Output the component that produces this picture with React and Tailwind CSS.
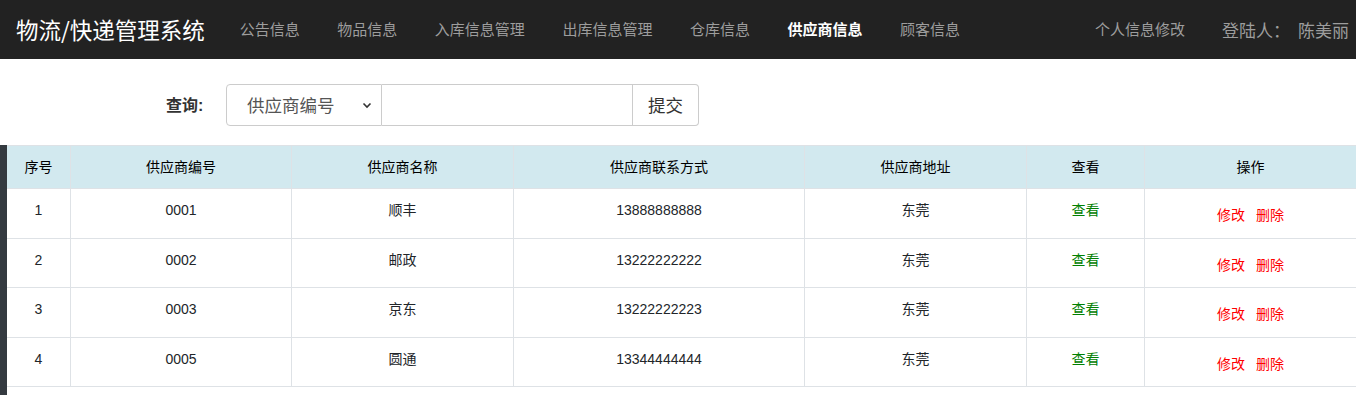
import React from "react";

const font = { fontFamily: '"Liberation Sans", "Noto Sans CJK SC", sans-serif' };

const navLinks = ["公告信息", "物品信息", "入库信息管理", "出库信息管理", "仓库信息", "供应商信息", "顾客信息"];

const rows = [
  ["1", "0001", "顺丰", "13888888888", "东莞"],
  ["2", "0002", "邮政", "13222222222", "东莞"],
  ["3", "0003", "京东", "13222222223", "东莞"],
  ["4", "0005", "圆通", "13344444444", "东莞"],
];

const headers = ["序号", "供应商编号", "供应商名称", "供应商联系方式", "供应商地址", "查看", "操作"];
const cols = "grid grid-cols-[64px_221px_222px_291px_222px_118px_1fr]";

export default function App() {
  return (
    <div className="w-[1356px] h-[395px] bg-white overflow-hidden" style={font}>
      <nav className="h-[59px] bg-[#222222] flex items-center pl-[16px] pr-[7px]">
        <div className="text-[22.5px] text-white leading-none" style={{ fontFamily: '"Noto Sans CJK SC", sans-serif' }}>
          物流/快递管理系统
        </div>
        <div className="flex gap-[37.5px] ml-[35px] text-[15px]" style={{ fontFamily: '"Noto Sans CJK SC", sans-serif' }}>
          {navLinks.map((l) => (
            <span key={l} className={l === "供应商信息" ? "text-white font-bold" : "text-[#9d9d9d]"}>
              {l}
            </span>
          ))}
        </div>
        <div className="ml-auto flex items-center text-[#9d9d9d]" style={{ fontFamily: '"Noto Sans CJK SC", sans-serif' }}>
          <span className="text-[15px]">个人信息修改</span>
          <span className="text-[17px] ml-[37px]">登陆人：</span>
          <span className="text-[17px] ml-[8px]">陈美丽</span>
        </div>
      </nav>

      <div className="h-[86px] flex items-start pt-[25px] pl-[166px]">
        <span className="text-[16px] font-bold text-[#333] mt-[10px] w-[60px]">查询:</span>
        <div className="flex h-[42px]">
          <div className="w-[156px] h-full border border-[#ccc] rounded-l-[4px] flex items-center pl-[20px] pr-[9px] text-[#555]">
            <span style={{ fontFamily: '"Noto Sans CJK SC", sans-serif' }} className="text-[17.5px]">供应商编号</span>
            <svg className="ml-auto" width="10" height="8" viewBox="0 0 10 8">
              <path d="M1.5 2.5 L5 6 L8.5 2.5" fill="none" stroke="#333" strokeWidth="1.6" />
            </svg>
          </div>
          <div className="w-[251px] h-full border border-l-0 border-[#ccc]" />
          <div className="w-[66px] h-full border border-l-0 border-[#ccc] rounded-r-[4px] flex items-center justify-center text-[17.5px] text-[#333]" style={{ fontFamily: '"Noto Sans CJK SC", sans-serif' }}>
            提交
          </div>
        </div>
      </div>

      <div className="flex">
        <div className="w-[7px] bg-[#343a40] h-[250px]" />
        <div className="flex-1 text-[14px] text-[#212529]">
          <div className={`${cols} h-[44px] bg-[#d2e9ef] border-t border-b border-[#dee2e6]`}>
            {headers.map((h, i) => (
              <div key={h} className={`flex items-center justify-center text-black ${i < 6 ? "border-r border-[#dee2e6]" : ""}`}>
                {h}
              </div>
            ))}
          </div>
          {rows.map((r) => (
            <div key={r[0]} className={`${cols} h-[49.5px] border-b border-[#dee2e6]`}>
              {r.map((c, i) => (
                <div key={i} className="pt-[11px] text-center border-r border-[#dee2e6]">
                  {c}
                </div>
              ))}
              <div className="pt-[11px] text-center border-r border-[#dee2e6]">
                <span className="text-[#008000]">查看</span>
              </div>
              <div className="pt-[16px] text-center">
                <span className="text-[#ff0000]">修改</span>
                <span className="text-[#ff0000] ml-[11px]">删除</span>
              </div>
            </div>
          ))}
        </div>
      </div>
    </div>
  );
}
